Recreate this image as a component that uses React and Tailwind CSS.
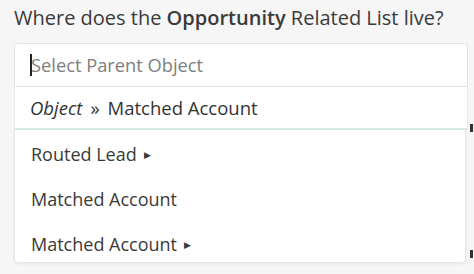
export default function App() {
  return (
    <div className="w-[474px] h-[274px] overflow-hidden bg-[#f6f6f6] relative" style={{ fontFamily: '"Open Sans", sans-serif' }}>
      <div className="pl-[14px] pt-[5px] text-[20px] leading-[26px] text-[#3a3a3a] whitespace-nowrap">
        Where does the <span className="font-semibold">Opportunity</span> Related List live?
      </div>
      <div className="ml-[14px] mt-[12px] w-[454px] flex flex-col">
        <div className="h-[44px] bg-white border border-[#e2e2e2] rounded-t-[3px] flex items-center pl-[15px] text-[18.3px] text-[#808080]">
          <span className="w-[2px] h-[22px] bg-[#222]" />
          <span className="-ml-[1px]">Select Parent Object</span>
        </div>
        <div className="h-[43px] bg-white border-x border-[#e0ecea] border-b-[2px] border-b-[#d6ebe6] flex items-center pl-[15px] text-[18.5px] text-[#333]">
          <span className="italic">Object</span>
          <span className="mx-[8px]">»</span>
          <span>Matched Account</span>
        </div>
        <div className="w-[452px] h-[133px] bg-white border-x border-b border-[#dfe9e7] rounded-b-[4px] shadow-[0_1px_3px_rgba(0,0,0,0.06)] flex flex-col pt-[2px] text-[18px] text-[#3a3a3a]">
          <div className="h-[45px] shrink-0 flex items-center pl-[16px]">
            Routed Lead <span className="ml-[7px] text-[9px]">▶</span>
          </div>
          <div className="h-[45px] shrink-0 flex items-center pl-[16px]">Matched Account</div>
          <div className="h-[45px] shrink-0 flex items-center pl-[16px]">
            Matched Account <span className="ml-[7px] text-[9px]">▶</span>
          </div>
        </div>
      </div>
      <span className="absolute left-[470px] top-[124px] w-[3px] h-[8px] bg-[#333]" />
      <span className="absolute left-[470px] top-[250px] w-[3px] h-[8px] bg-[#333]" />
    </div>
  );
}
